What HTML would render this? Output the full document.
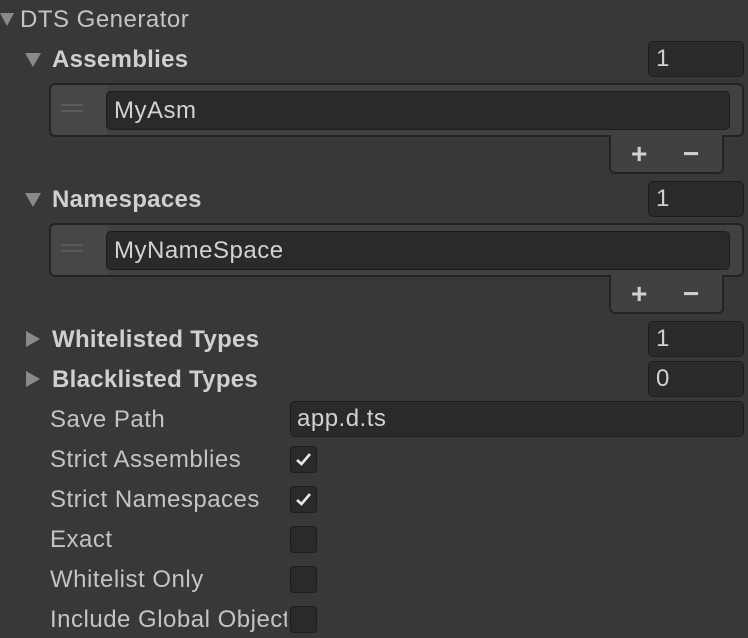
<!DOCTYPE html>
<html><head><style>
body{margin:0;width:748px;height:638px;background:#383838;font-family:"Liberation Sans",sans-serif;color:#c4c4c4;position:relative;overflow:hidden}
.a{position:absolute;white-space:nowrap;font-size:24px;line-height:26px;letter-spacing:0.5px}
.b{font-weight:bold;color:#d0d0d0;letter-spacing:0.3px}
.f{position:absolute;background:#2a2a2a;border:1px solid #1c1c1c;border-radius:5px;box-sizing:border-box;color:#d2d2d2;font-size:24px;letter-spacing:0.5px;padding-left:7px;line-height:33px}
.tri{position:absolute;width:0;height:0}
.down{border-left:8px solid transparent;border-right:8px solid transparent;border-top:14px solid #8a8a8a}
.right{border-top:8px solid transparent;border-bottom:8px solid transparent;border-left:14px solid #8a8a8a}
.cb{position:absolute;left:290px;width:27px;height:27px;background:#2a2a2a;border:1px solid #1c1c1c;border-radius:4px;box-sizing:border-box}
.list{position:absolute;left:49px;width:695px;height:54px;background:#414141;border:2px solid #232323;border-radius:6px;box-sizing:border-box;overflow:hidden}
.strip{position:absolute;left:0;top:0;width:56px;height:50px;background:#474747}
.foot{position:absolute;left:609px;width:115px;height:39px;background:#414141;border:2px solid #232323;border-top:none;border-radius:0 0 6px 6px;box-sizing:border-box}
.foot span{position:absolute;top:3px;font-size:28px;color:#d0d0d0;font-weight:bold}
.h{position:absolute;left:10px;top:19px;width:22px;height:2px;background:#5a5a5a;box-shadow:0 6px 0 #5a5a5a}
</style></head><body>
<div class="tri down" style="left:0;top:13px;border-left-width:7px;border-right-width:7px;border-top-width:13px"></div>
<div class="a" style="left:20px;top:7px">DTS Generator</div>

<div class="tri down" style="left:25px;top:53px"></div>
<div class="a b" style="left:52px;top:47px">Assemblies</div>
<div class="f" style="left:648px;top:41px;width:96px;height:36px">1</div>
<div class="list" style="top:83px"><div class="strip"></div><div class="h"></div></div>
<div class="f" style="left:106px;top:91px;width:624px;height:39px;line-height:37px">MyAsm</div>
<div class="foot" style="top:135px"><span style="left:20px">+</span><span style="left:72px">−</span></div>

<div class="tri down" style="left:25px;top:193px"></div>
<div class="a b" style="left:52px;top:187px">Namespaces</div>
<div class="f" style="left:648px;top:181px;width:96px;height:36px">1</div>
<div class="list" style="top:223px"><div class="strip"></div><div class="h"></div></div>
<div class="f" style="left:106px;top:231px;width:624px;height:39px;line-height:37px">MyNameSpace</div>
<div class="foot" style="top:275px"><span style="left:20px">+</span><span style="left:72px">−</span></div>

<div class="tri right" style="left:26px;top:331px"></div>
<div class="a b" style="left:52px;top:327px">Whitelisted Types</div>
<div class="f" style="left:648px;top:321px;width:96px;height:36px">1</div>
<div class="tri right" style="left:26px;top:371px"></div>
<div class="a b" style="left:52px;top:367px">Blacklisted Types</div>
<div class="f" style="left:648px;top:361px;width:96px;height:36px">0</div>

<div class="a" style="left:50px;top:407px">Save Path</div>
<div class="f" style="left:290px;top:401px;width:454px;height:36px;padding-left:6px">app.d.ts</div>
<div class="a" style="left:50px;top:447px">Strict Assemblies</div>
<div class="cb" style="top:446px"><svg width="25" height="25" style="position:absolute;left:0;top:0"><path d="M6 13l4.5 4L19 7" stroke="#e8e8e8" stroke-width="2.6" fill="none"/></svg></div>
<div class="a" style="left:50px;top:487px">Strict Namespaces</div>
<div class="cb" style="top:486px"><svg width="25" height="25" style="position:absolute;left:0;top:0"><path d="M6 13l4.5 4L19 7" stroke="#e8e8e8" stroke-width="2.6" fill="none"/></svg></div>
<div class="a" style="left:50px;top:527px">Exact</div>
<div class="cb" style="top:526px"></div>
<div class="a" style="left:50px;top:567px">Whitelist Only</div>
<div class="cb" style="top:566px"></div>
<div class="a" style="left:50px;top:607px;width:237px;overflow:hidden">Include Global Objects</div>
<div class="cb" style="top:606px"></div>
</body></html>
